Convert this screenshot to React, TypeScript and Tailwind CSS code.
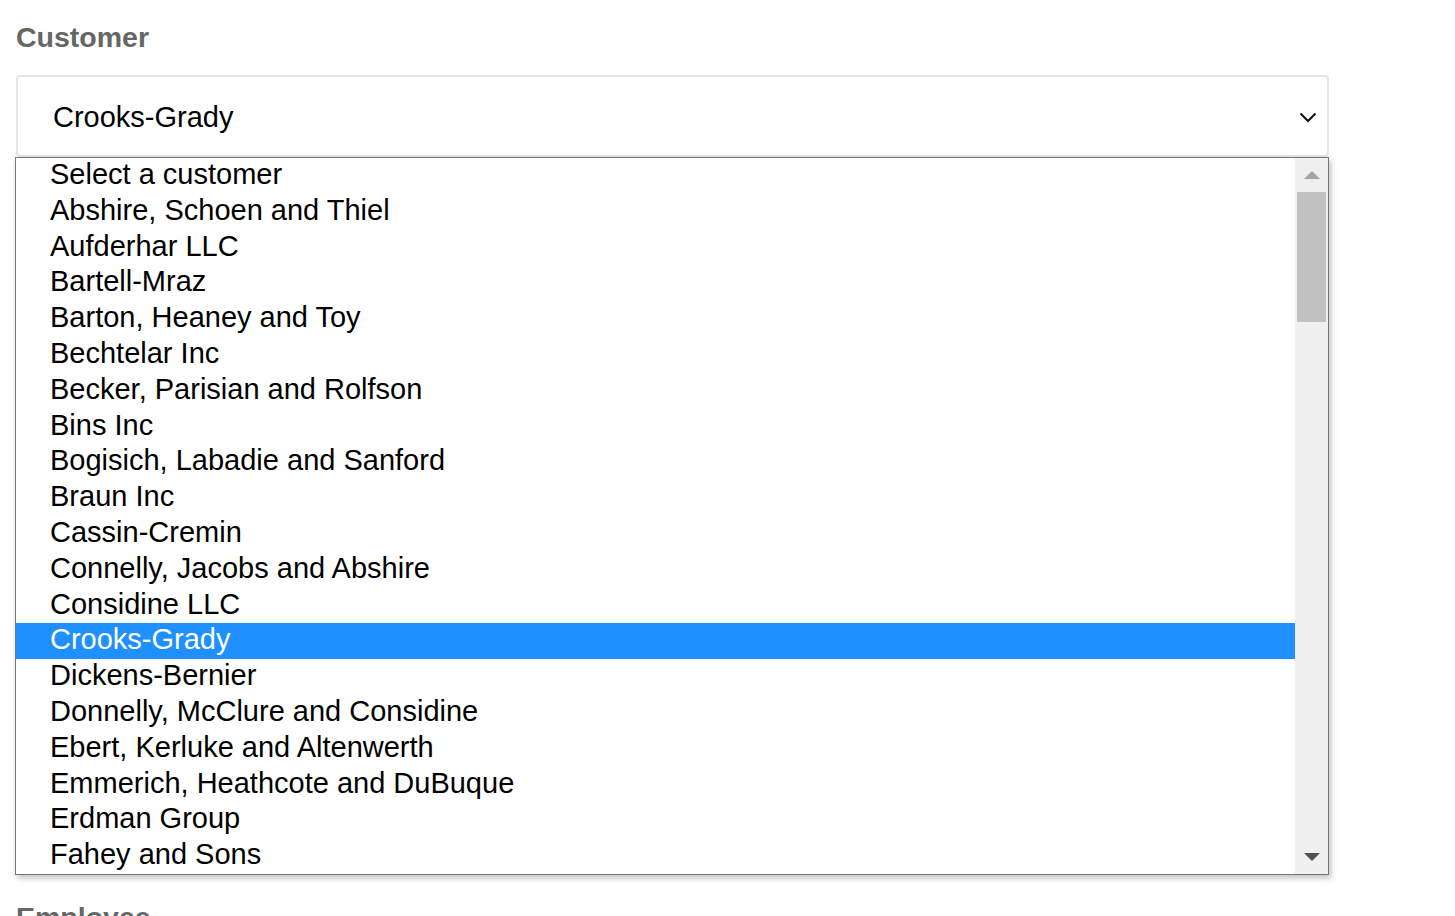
import React from "react";

const customers = [
  "Select a customer",
  "Abshire, Schoen and Thiel",
  "Aufderhar LLC",
  "Bartell-Mraz",
  "Barton, Heaney and Toy",
  "Bechtelar Inc",
  "Becker, Parisian and Rolfson",
  "Bins Inc",
  "Bogisich, Labadie and Sanford",
  "Braun Inc",
  "Cassin-Cremin",
  "Connelly, Jacobs and Abshire",
  "Considine LLC",
  "Crooks-Grady",
  "Dickens-Bernier",
  "Donnelly, McClure and Considine",
  "Ebert, Kerluke and Altenwerth",
  "Emmerich, Heathcote and DuBuque",
  "Erdman Group",
  "Fahey and Sons",
];

export default function App() {
  return (
    <div
      className="w-[1455px] h-[916px] overflow-hidden bg-white pl-[16px] pt-[19px]"
      style={{ fontFamily: '"Liberation Sans", Arial, sans-serif' }}
    >
      <div className="w-[1313px]">
        <div className="text-[28.5px] font-bold text-[#666666] leading-[36px]">Customer</div>
        <div className="relative mt-[20px]">
          <div className="h-[82px] border-2 border-[#e6e6e6] rounded-[4px] flex items-center justify-between pl-[35px] pr-[10px] pt-[2px]">
            <span className="text-[29px] text-black leading-none">Crooks-Grady</span>
            <svg width="18" height="11" viewBox="0 0 18 11">
              <path d="M1.5 1.5 L9 9 L16.5 1.5" fill="none" stroke="#111" strokeWidth="2" />
            </svg>
          </div>
          <div className="absolute left-[-1px] top-[82px] w-[1314px] h-[718px] border border-[#767676] bg-white shadow-[2px_3px_6px_rgba(0,0,0,0.25)] flex">
            <div className="flex-1 flex flex-col">
              {customers.map((c) => (
                <div
                  key={c}
                  className={
                    c === "Crooks-Grady"
                      ? "h-[35.8px] shrink-0 pl-[34px] pt-[1px] text-[29px] text-white bg-[#1e90ff] leading-[31px]"
                      : "h-[35.8px] shrink-0 pl-[34px] pt-[1px] text-[29px] text-black leading-[31px]"
                  }
                >
                  {c}
                </div>
              ))}
            </div>
            <div className="w-[33px] bg-[#f0f0f0] flex flex-col items-center">
              <div className="h-[34px] w-full flex items-center justify-center">
                <svg width="16" height="8" viewBox="0 0 16 8">
                  <path d="M0 8 L8 0 L16 8 Z" fill="#a3a3a3" />
                </svg>
              </div>
              <div className="w-[29px] h-[130px] bg-[#c1c1c1]" />
              <div className="flex-1" />
              <div className="h-[34px] w-full flex items-center justify-center">
                <svg width="16" height="8" viewBox="0 0 16 8">
                  <path d="M0 0 L16 0 L8 8 Z" fill="#505050" />
                </svg>
              </div>
            </div>
          </div>
        </div>
        <div className="mt-[742px] text-[28.5px] font-bold text-[#666666] leading-[36px]">Employee</div>
      </div>
    </div>
  );
}
